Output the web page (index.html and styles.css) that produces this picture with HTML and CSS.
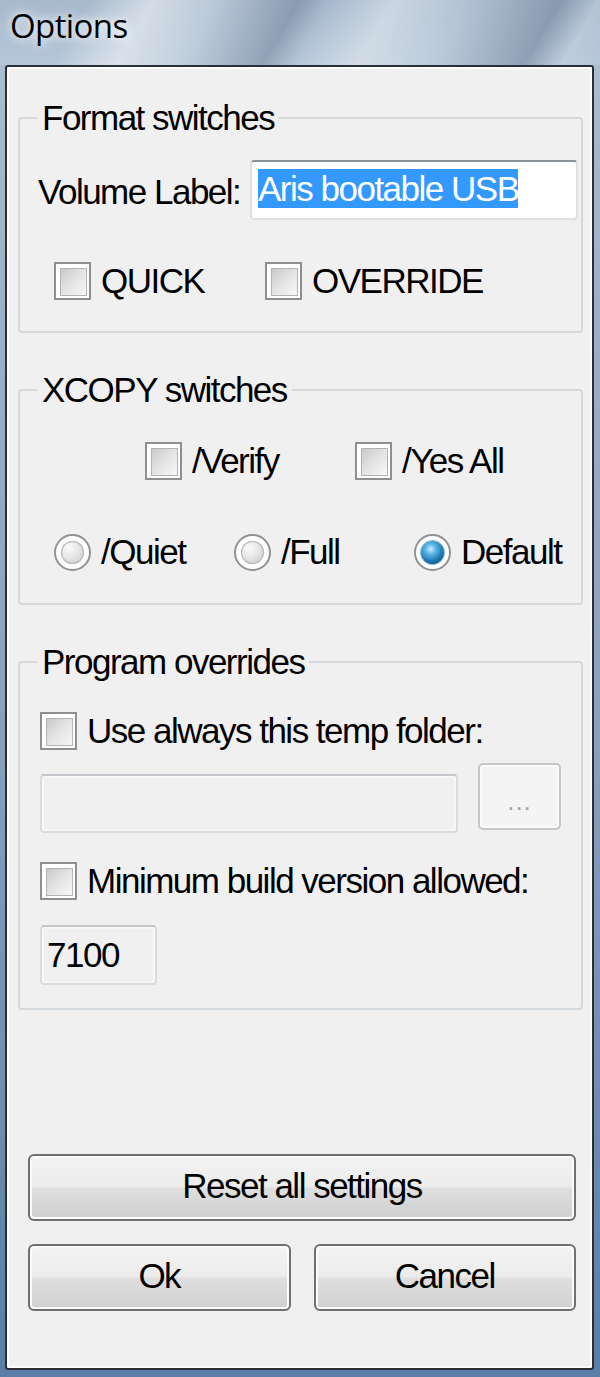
FILE: index.html
```html
<!DOCTYPE html>
<html>
<head>
<meta charset="utf-8">
<title>Options</title>
<link rel="stylesheet" href="styles.css">
</head>
<body>
<div class="window">
  <div class="titlebar"><span class="title">Options</span></div>
  <div class="client">
    <fieldset class="group g1">
      <legend>Format switches</legend>
      <div class="row vol-row">
        <span class="vol-label">Volume Label:</span>
        <div class="textbox vol-input"><span class="sel">Aris bootable USB</span></div>
      </div>
      <div class="row checks1">
        <div class="opt w-quick"><span class="cb"></span><span>QUICK</span></div>
        <div class="opt"><span class="cb"></span><span>OVERRIDE</span></div>
      </div>
    </fieldset>

    <fieldset class="group g2">
      <legend>XCOPY switches</legend>
      <div class="row checks2">
        <div class="opt w-verify"><span class="cb"></span><span>/Verify</span></div>
        <div class="opt"><span class="cb"></span><span>/Yes All</span></div>
      </div>
      <div class="row radios">
        <div class="opt w-radio"><span class="rb"></span><span>/Quiet</span></div>
        <div class="opt w-radio"><span class="rb"></span><span>/Full</span></div>
        <div class="opt"><span class="rb on"></span><span>Default</span></div>
      </div>
    </fieldset>

    <fieldset class="group g3">
      <legend>Program overrides</legend>
      <div class="row temp-check">
        <div class="opt"><span class="cb"></span><span>Use always this temp folder:</span></div>
      </div>
      <div class="row temp-row">
        <div class="textbox disabled temp-input"></div>
        <div class="browse">...</div>
      </div>
      <div class="row build-check">
        <div class="opt"><span class="cb"></span><span>Minimum build version allowed:</span></div>
      </div>
      <div class="row build-row">
        <div class="textbox disabled build-input">7100</div>
      </div>
    </fieldset>

    <div class="buttons">
      <div class="btn reset">Reset all settings</div>
      <div class="btn-pair">
        <div class="btn">Ok</div>
        <div class="btn">Cancel</div>
      </div>
    </div>
  </div>
</div>
</body>
</html>
```
FILE: styles.css
```css
* { box-sizing: border-box; }

html, body {
  margin: 0;
  padding: 0;
}

body {
  width: 600px;
  height: 1377px;
  overflow: hidden;
  font-family: "Liberation Sans", Arial, sans-serif;
  font-size: 35px;
  letter-spacing: -1.5px;
  line-height: 40px;
  color: #000;
  background: linear-gradient(to bottom, #b3c4d6 0, #a4b7cc 140px, #86a0be 55%, #5a7ea6 100%);
}

.window {
  height: 1377px;
  display: flex;
  flex-direction: column;
}

.titlebar {
  height: 65px;
  flex: none;
  padding: 3px 0 0 10px;
  background:
    linear-gradient(120deg,
      rgba(255,255,255,0) 0,
      rgba(255,255,255,0) 14%,
      rgba(255,255,255,.5) 24%,
      rgba(255,255,255,.2) 34%,
      rgba(70,90,115,.32) 47%,
      rgba(255,255,255,0) 52%,
      rgba(255,255,255,.4) 62%,
      rgba(255,255,255,.1) 74%,
      rgba(70,90,115,.34) 88%,
      rgba(255,255,255,.15) 94%,
      rgba(255,255,255,0) 100%),
    linear-gradient(to bottom, #a7b9cd, #b5c6d8);
}

.title {
  font-family: "Open Sans", "Noto Sans", sans-serif;
  font-size: 33px;
  letter-spacing: -0.6px;
  line-height: 45px;
  color: #000;
  text-shadow: 0 0 8px rgba(255,255,255,.9), 0 0 14px rgba(255,255,255,.7);
}

.client {
  flex: 1;
  margin: 0 6px 7px 5px;
  border: 2px solid #2b3036;
  border-radius: 3px;
  background: #f0f0f0;
  box-shadow: inset 0 0 0 2px #fdfdfd;
  display: flex;
  flex-direction: column;
}

/* group boxes */
.group {
  margin: 0 9px 0 11px;
  padding: 0;
  border: 2px solid #d3d8dd;
  border-radius: 4px;
  min-width: 0;
}

.group legend {
  margin-left: 17px;
  padding: 0 5px;
  line-height: 40px;
  height: 40px;
}

.g1 { margin-top: 31px; padding-bottom: 31px; }
.g2 { margin-top: 37px; padding-bottom: 32px; }
.g3 { margin-top: 37px; padding-bottom: 23px; }

.row {
  display: flex;
  align-items: center;
}

.opt {
  display: flex;
  align-items: center;
  gap: 10px;
  height: 38px;
  white-space: nowrap;
}

/* format switches */
.vol-row { margin-top: 22px; padding-left: 18px; }
.vol-label { width: 212px; flex: none; padding-top: 4px; }
.vol-input {
  flex: 1;
  margin-right: 3px;
  height: 60px;
  padding: 0 6px;
  display: flex;
  align-items: center;
}
.sel {
  background: #3399ff;
  color: #fff;
  line-height: 39px;
  display: inline-block;
  margin-top: -4px;
}

.checks1 { margin-top: 42px; padding-left: 34px; }
.w-quick { width: 211px; }

/* xcopy */
.checks2 { margin-top: 32px; padding-left: 125px; }
.w-verify { width: 210px; }
.radios { margin-top: 53px; padding-left: 34px; }
.w-radio { width: 180px; }

/* program overrides */
.temp-check { margin-top: 30px; padding-left: 20px; }
.temp-row { margin-top: 13px; padding-left: 20px; align-items: flex-start; }
.temp-input { width: 418px; height: 59px; margin-top: 11px; }
.browse {
  width: 83px;
  height: 67px;
  margin-left: 20px;
  border: 2px solid #c3c6ca;
  border-radius: 5px;
  background: #f4f4f4;
  box-shadow: inset 0 0 0 2px #fbfbfb;
  color: #a3a3a3;
  font-size: 26px;
  letter-spacing: 1px;
  display: flex;
  align-items: center;
  justify-content: center;
  padding-top: 8px;
}
.build-check { margin-top: 29px; padding-left: 20px; }
.build-row { margin-top: 25px; padding-left: 20px; }
.build-input {
  width: 117px;
  height: 60px;
  padding: 0 5px;
  display: flex;
  align-items: center;
}

/* text boxes */
.textbox {
  background: #fff;
  border: 2px solid #dde1e6;
  border-top-color: #8c939b;
  border-radius: 4px;
}
.textbox.disabled {
  background: #f0f0f0;
  border-color: #d9dcdf;
  border-top-color: #c3c7cc;
  box-shadow: inset 0 0 0 2px #f7f7f7;
}

/* checkbox */
.cb {
  flex: none;
  width: 37px;
  height: 38px;
  border: 2px solid #8e8f8f;
  background: #fff;
  padding: 4px;
  display: block;
}
.cb::after {
  content: "";
  display: block;
  width: 100%;
  height: 100%;
  border: 1px solid #b3b3b3;
  background: linear-gradient(135deg, #c9c9c9 0%, #e4e4e4 50%, #f7f7f7 100%);
}

/* radio */
.rb {
  flex: none;
  width: 37px;
  height: 37px;
  border-radius: 50%;
  border: 2px solid #929292;
  background: #fff;
  padding: 5px;
  display: block;
}
.rb::after {
  content: "";
  display: block;
  width: 100%;
  height: 100%;
  border-radius: 50%;
  background: radial-gradient(circle at 35% 30%, #fafafa 0%, #e6e6e6 45%, #c4c4c4 100%);
  box-shadow: inset 0 0 0 1px #b5b5b5;
}
.rb.on::after {
  background: radial-gradient(circle at 42% 35%, #c8efff 0%, #5fb8e6 25%, #1b78b4 60%, #0b3f66 100%);
  box-shadow: 0 0 0 1px #8bb6d2;
}

/* buttons */
.buttons {
  margin-top: auto;
  margin-bottom: 57px;
  padding: 0 16px 0 21px;
  display: flex;
  flex-direction: column;
  gap: 23px;
}
.btn-pair {
  display: grid;
  grid-template-columns: 1fr 1fr;
  gap: 23px;
}
.btn {
  height: 67px;
  border: 2px solid #707070;
  border-radius: 6px;
  box-shadow: inset 0 0 0 2px #fcfcfc;
  background: linear-gradient(to bottom, #f3f3f3 0%, #ececec 48%, #dedede 52%, #d0d0d0 100%);
  display: flex;
  align-items: center;
  justify-content: center;
  padding-bottom: 3px;
}
```
